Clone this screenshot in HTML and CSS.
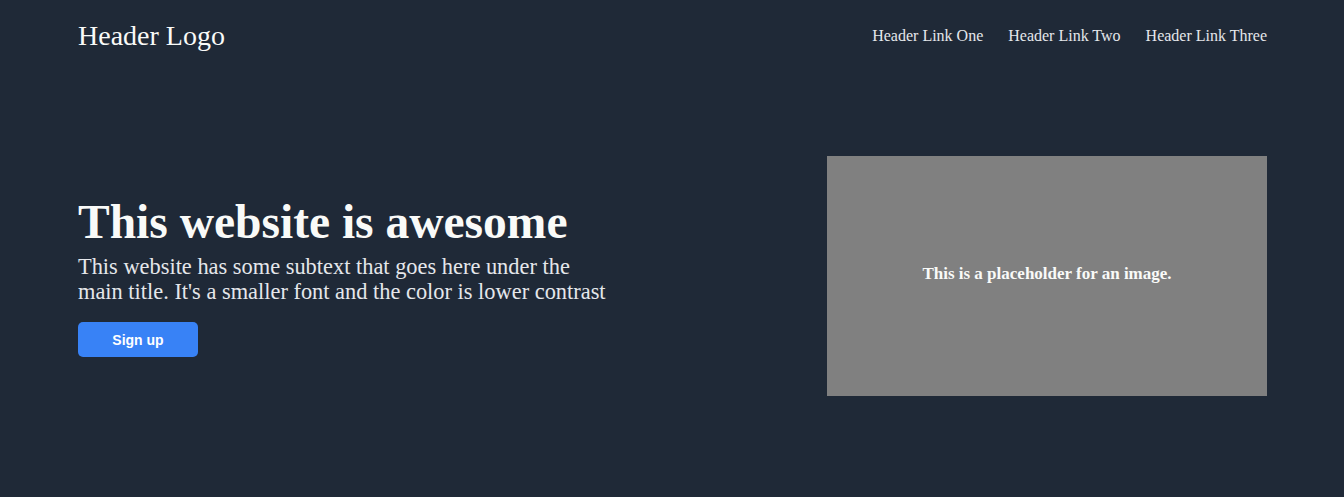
FILE: index.html
```html
<!DOCTYPE html>
<html lang="en">
<head>
<meta charset="utf-8">
<title>Landing</title>
<link rel="stylesheet" href="styles.css">
</head>
<body>
<div class="page">
  <header class="header">
    <div class="logo">Header Logo</div>
    <nav class="links">
      <a class="link" href="#">Header Link One</a>
      <a class="link" href="#">Header Link Two</a>
      <a class="link" href="#">Header Link Three</a>
    </nav>
  </header>
  <section class="hero">
    <div class="hero-text">
      <h1 class="title">This website is awesome</h1>
      <p class="sub">This website has some subtext that goes here under the main title. It's a smaller font and the color is lower contrast</p>
      <button class="btn">Sign up</button>
    </div>
    <div class="placeholder">This is a placeholder for an image.</div>
  </section>
</div>
</body>
</html>
```
FILE: styles.css
```css
html, body {
  margin: 0;
  padding: 0;
}
body {
  background: #1f2937;
  font-family: "Liberation Serif", "Times New Roman", serif;
  color: #f9faf8;
  height: 497px;
  overflow: hidden;
}
.page {
  padding: 0 77px 0 78px;
}
.header {
  display: flex;
  justify-content: space-between;
  align-items: center;
  padding-top: 20px;
}
.logo {
  font-size: 28px;
  line-height: 32px;
  color: #f9faf8;
}
.links {
  display: flex;
  gap: 25px;
}
.link {
  color: #e5e7eb;
  text-decoration: none;
  font-size: 16px;
}
.hero {
  display: flex;
  justify-content: space-between;
  align-items: center;
  padding-top: 104px;
}
.hero-text {
  width: 535px;
}
.title {
  margin: 0;
  font-size: 47.5px;
  font-weight: bold;
  line-height: 55px;
  color: #f9faf8;
}
.sub {
  margin: 4px 0 0;
  font-size: 22.4px;
  line-height: 25px;
  color: #e5e7eb;
}
.btn {
  margin-top: 18px;
  width: 120px;
  height: 35px;
  border: none;
  border-radius: 5px;
  background: #3882f6;
  color: #ffffff;
  font-family: "Liberation Sans", Arial, sans-serif;
  font-weight: bold;
  font-size: 14px;
  padding: 0;
}
.placeholder {
  width: 440px;
  height: 240px;
  background: #808080;
  display: flex;
  align-items: center;
  justify-content: center;
  padding-bottom: 4px;
  box-sizing: border-box;
  font-weight: bold;
  font-size: 17px;
  color: #f9faf8;
}
```
